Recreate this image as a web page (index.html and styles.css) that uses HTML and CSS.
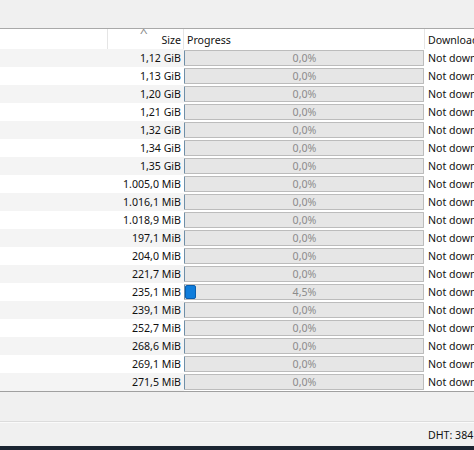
FILE: index.html
```html
<!DOCTYPE html>
<html>
<head>
<meta charset="utf-8">
<link rel="stylesheet" href="styles.css">
</head>
<body>
<div class="window">
  <div class="toolbar"></div>
  <div class="table">
    <div class="row head">
      <div class="cell name"><span class="sort">^</span></div>
      <div class="cell size">Size</div>
      <div class="cell prog-h">Progress</div>
      <div class="cell dl">Download Priority</div>
    </div>
    <div id="rows"></div>
  </div>
  <div class="spacer"></div>
  <div class="status"><span class="st">DHT: 384 nodes</span></div>
  <div class="taskbar"></div>
</div>
<script src="app.js"></script>
</body>
</html>
```

FILE: app.js
```js
const sizes = ["1,12 GiB","1,13 GiB","1,20 GiB","1,21 GiB","1,32 GiB","1,34 GiB","1,35 GiB","1.005,0 MiB","1.016,1 MiB","1.018,9 MiB","197,1 MiB","204,0 MiB","221,7 MiB","235,1 MiB","239,1 MiB","252,7 MiB","268,6 MiB","269,1 MiB","271,5 MiB"];
const rows = document.getElementById('rows');
sizes.forEach((s, i) => {
  const pct = i === 13 ? 4.5 : 0;
  const r = document.createElement('div');
  r.className = 'row data' + (i % 2 === 0 ? ' odd' : '');
  r.innerHTML =
    '<div class="cell name"></div>' +
    '<div class="cell size">' + s + '</div>' +
    '<div class="cell prog"><div class="bar">' +
      (pct > 0 ? '<div class="chunk" style="width:' + Math.max(8, Math.round(pct / 100 * 237)) + 'px"></div>' : '') +
      '<span class="pct">' + pct.toFixed(1).replace('.', ',') + '%</span></div></div>' +
    '<div class="cell dl">Not downloaded</div>';
  rows.appendChild(r);
});
```

FILE: styles.css
```css
html, body {
  margin: 0;
  padding: 0;
  width: 474px;
  height: 450px;
  overflow: hidden;
  background: #f0f0f0;
}
.window {
  display: flex;
  flex-direction: column;
  height: 450px;
  font-family: "Noto Sans", "Open Sans", sans-serif;
  font-size: 10.6px;
  color: #111;
}
.toolbar {
  height: 28px;
  flex: none;
  background: #f0f0f0;
  border-bottom: 1px solid #a9a9a9;
}
.table {
  flex: none;
  background: #fff;
  border-bottom: 1px solid #a0a0a0;
}
.row {
  display: grid;
  grid-template-columns: 108px 76px 241px 1fr;
  white-space: nowrap;
}
.head {
  height: 20px;
  background: #fff;
}
.head .cell {
  padding-top: 2px;
  line-height: 18px;
  border-right: 1px solid #e5e5e5;
}
.cell {
  overflow: hidden;
  box-sizing: border-box;
}
.name {
  position: relative;
}
.head .name {
  overflow: visible;
}
.sort {
  position: absolute;
  left: 141px;
  top: -1px;
  font-size: 10px;
  line-height: 10px;
  color: #8a8a8a;
  transform: scaleX(1.4);
}
.size {
  text-align: right;
  padding-right: 3px;
}
.head .size {
  padding-right: 2px;
}
.prog-h {
  padding-left: 3px;
}
.dl {
  padding-left: 3px;
}
.head .dl {
  border-right: none;
}
.data {
  height: 18px;
}
.data .name,
.data .size,
.data .dl {
  padding-top: 1px;
  line-height: 17px;
}
.data.odd .name,
.data.odd .size {
  background: #f4f4f4;
}
.data .dl {
  background: #fff;
}
.prog {
  padding: 1px 1px 1px 0;
}
.bar {
  position: relative;
  height: 16px;
  box-sizing: border-box;
  background: #e6e6e6;
  border: 1px solid #bcbcbc;
  border-left: 1px solid #6f8fa8;
  border-radius: 1px;
}
.chunk {
  position: absolute;
  left: 0;
  top: 0;
  bottom: 0;
  background: #0f7ddb;
  border-radius: 2px;
  border: 1px solid #0a5eae;
  box-sizing: border-box;
}
.pct {
  position: relative;
  display: block;
  text-align: center;
  padding-top: 1px;
  line-height: 13px;
  color: #8c8c8c;
  padding-left: 1px;
}
.spacer {
  flex: none;
  height: 29px;
  background: #f0f0f0;
  border-bottom: 1px solid #dcdcdc;
}
.status {
  flex: none;
  height: 23px;
  background: #f0f0f0;
  position: relative;
  border-top: 1px solid #fafafa;
}
.st {
  position: absolute;
  left: 428px;
  top: 5px;
  white-space: nowrap;
}
.taskbar {
  flex: 1;
  background: #1b2532;
}
```
